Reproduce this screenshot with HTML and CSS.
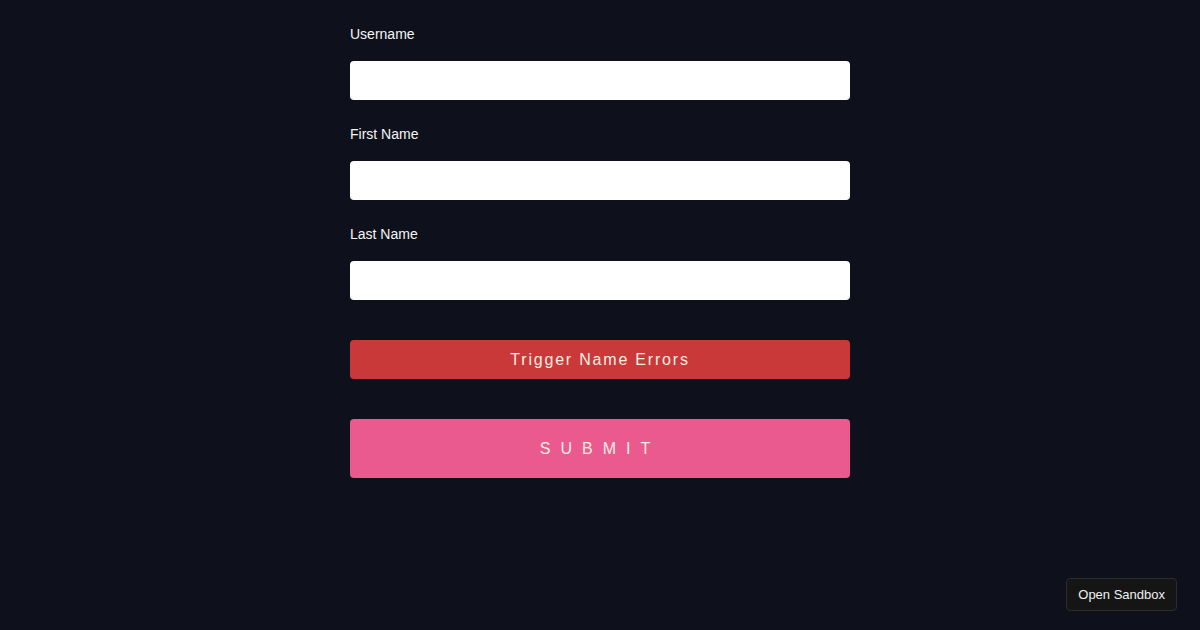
FILE: index.html
```html
<!DOCTYPE html>
<html lang="en">
<head>
    <meta charset="UTF-8">
    <meta name="viewport" content="width=device-width, initial-scale=1.0">
    <title>Name Form</title>
    <link rel="stylesheet" href="styles.css">
</head>
<body>
    <form class="name-form">
        <div class="field">
            <label for="username">Username</label>
            <input type="text" id="username">
        </div>
        <div class="field">
            <label for="firstName">First Name</label>
            <input type="text" id="firstName">
        </div>
        <div class="field">
            <label for="lastName">Last Name</label>
            <input type="text" id="lastName">
        </div>

        <button type="button" class="btn trigger-btn">Trigger Name Errors</button>
        <button type="submit" class="btn submit-btn">SUBMIT</button>
    </form>

    <a href="#" class="sandbox-btn">Open Sandbox</a>
</body>
</html>
```

FILE: styles.css
```css
* {
    margin: 0;
    padding: 0;
    box-sizing: border-box;
}

body {
    font-family: 'Liberation Sans', Arial, sans-serif;
    background: #0e111c;
    min-height: 100vh;
    color: #f5f5f5;
}

.name-form {
    width: 500px;
    margin: 0 auto;
    padding-top: 24px;
    display: flex;
    flex-direction: column;
}

.field {
    display: flex;
    flex-direction: column;
    margin-bottom: 24px;
}

.field label {
    font-size: 14px;
    line-height: 20px;
    margin-bottom: 17px;
}

.field input {
    height: 39px;
    border: none;
    border-radius: 4px;
    background: #fff;
    padding: 0 12px;
    font-size: 14px;
}

.btn {
    border: none;
    border-radius: 4px;
    color: #fbeee0;
    font-family: inherit;
    cursor: pointer;
}

.trigger-btn {
    margin-top: 16px;
    height: 39px;
    background: #c9393a;
    font-size: 16px;
    letter-spacing: 1.8px;
}

.submit-btn {
    margin-top: 40px;
    height: 59px;
    background: #ea5a8f;
    font-size: 16px;
    letter-spacing: 10px;
}

.sandbox-btn {
    position: fixed;
    right: 23px;
    bottom: 19px;
    padding: 8px 11px;
    background: #151515;
    border: 1px solid #2c2c2c;
    border-radius: 4px;
    color: #f0f0f0;
    font-size: 13px;
    line-height: 15px;
    text-decoration: none;
}
```
